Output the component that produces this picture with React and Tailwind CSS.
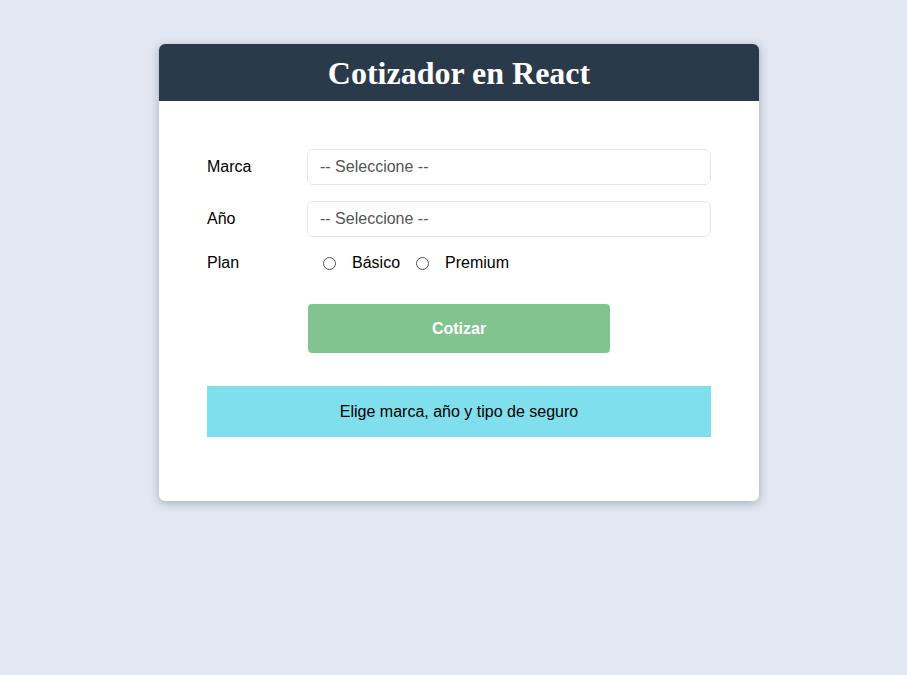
export default function App() {
  return (
    <div className="min-h-screen bg-[#e1e8f2] pl-[11px] pt-11" style={{ fontFamily: '"Liberation Sans", Arial, sans-serif' }}>
      <div className="mx-auto w-[600px] overflow-hidden rounded-md bg-white shadow-[0_2px_10px_rgba(40,55,80,0.35)]">
        {/* Header */}
        <header className="flex h-[57px] items-center justify-center bg-[#2b3a4a]">
          <h1 className="text-[32px] font-bold text-white" style={{ fontFamily: '"Liberation Serif", "Times New Roman", serif' }}>
            Cotizador en React
          </h1>
        </header>

        {/* Form */}
        <form className="px-12 pb-16 pt-12 text-base text-black">
          <div className="flex items-center">
            <label className="w-[100px]">Marca</label>
            <div className="flex h-9 flex-1 items-center rounded-md border border-[#e3e6ef] px-3 text-[#555]">
              -- Seleccione --
            </div>
          </div>

          <div className="mt-4 flex items-center">
            <label className="w-[100px]">Año</label>
            <div className="flex h-9 flex-1 items-center rounded-md border border-[#e3e6ef] px-3 text-[#555]">
              -- Seleccione --
            </div>
          </div>

          <div className="mt-[14px] flex items-center">
            <label className="w-[100px]">Plan</label>
            <span className="ml-4 inline-block h-[13px] w-[13px] rounded-full border border-[#555]"></span>
            <span className="ml-4">Básico</span>
            <span className="ml-4 inline-block h-[13px] w-[13px] rounded-full border border-[#555]"></span>
            <span className="ml-4">Premium</span>
          </div>

          <button
            type="button"
            className="mt-[29px] ml-[101px] flex h-[49px] w-[302px] items-center justify-center rounded bg-[#81c48f] font-bold text-white"
          >
            Cotizar
          </button>

          <div className="mt-[33px] flex h-[51px] items-center justify-center bg-[#7fdfed]">
            Elige marca, año y tipo de seguro
          </div>
        </form>
      </div>
    </div>
  );
}
